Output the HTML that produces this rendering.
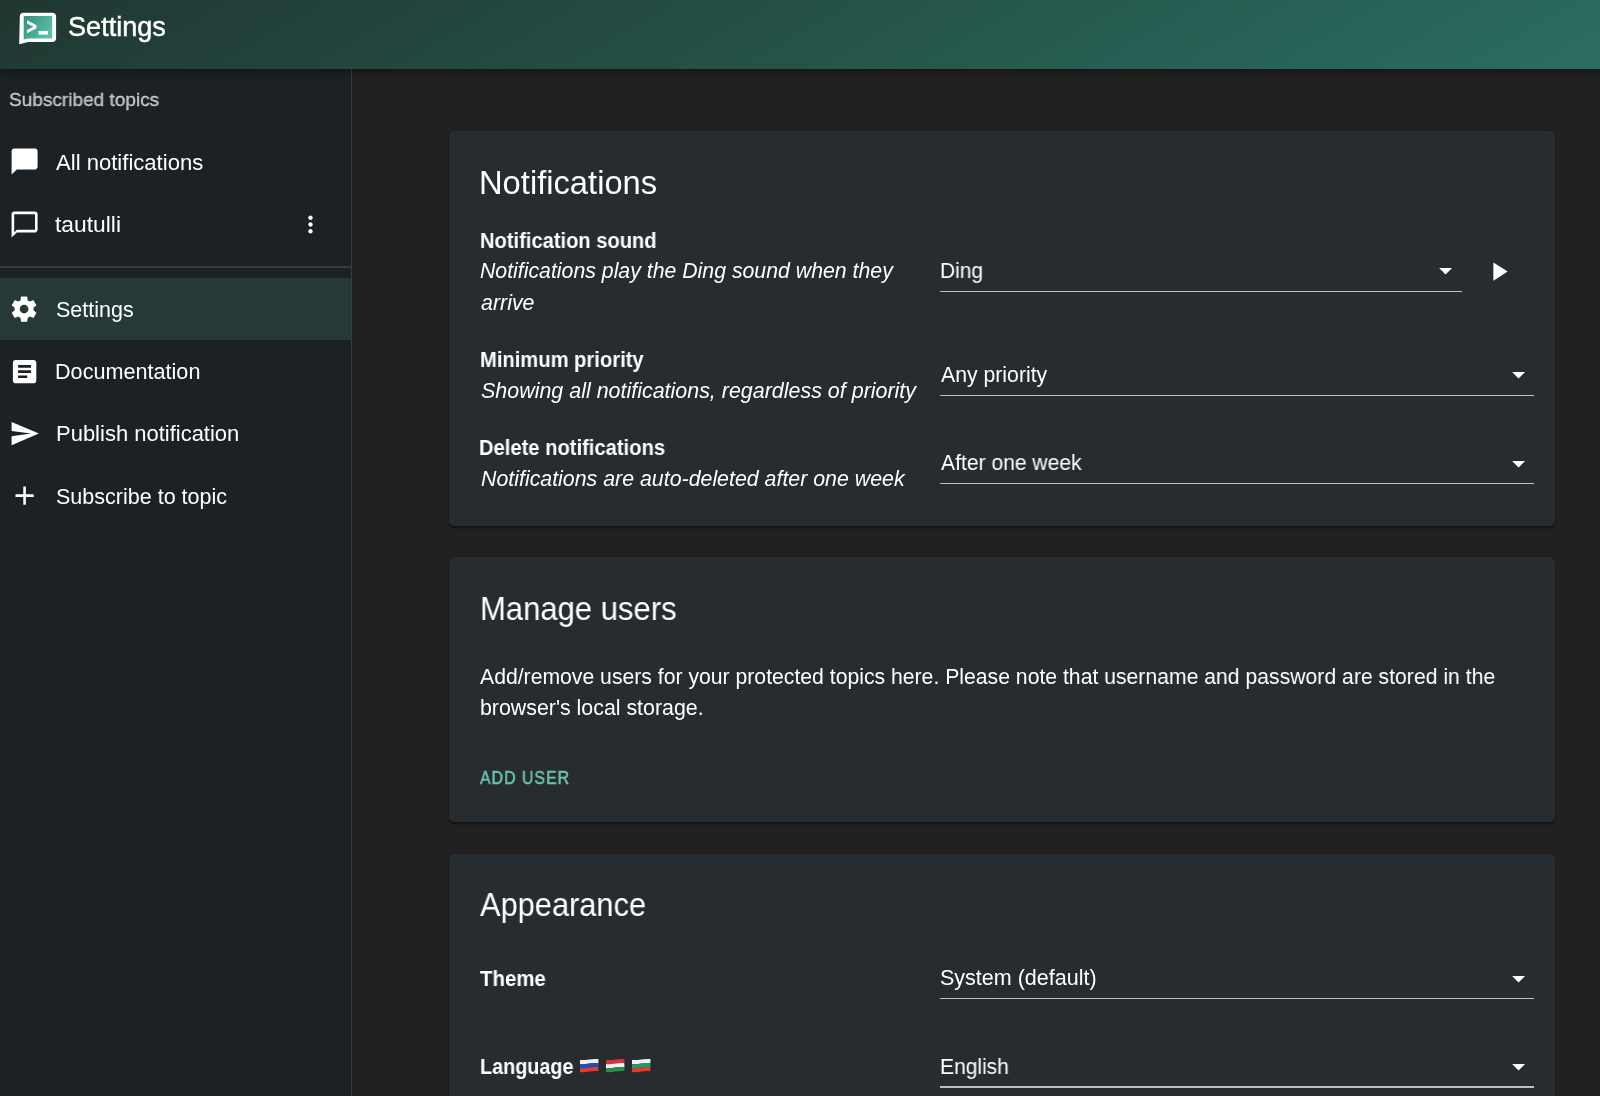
<!DOCTYPE html>
<html><head><meta charset='utf-8'><title>Settings</title>
<style>
html,body{margin:0;padding:0;width:1600px;height:1096px;overflow:hidden;background:#212121;font-family:"Liberation Sans",sans-serif;}
.t{position:absolute;white-space:nowrap;transform-origin:0 0;will-change:transform;}
.ic{position:absolute;display:block;}
#root{position:relative;width:1600px;height:1096px;overflow:hidden;background:#212121;}
</style></head><body><div id="root">
<div style='position:absolute;left:0;top:68.9px;width:351px;height:1030px;background:#1b2124'></div>
<div style='position:absolute;left:350.6px;top:68.9px;width:1.3px;height:1030px;background:rgba(255,255,255,0.12)'></div>
<div style='position:absolute;left:0;top:266.3px;width:350.6px;height:1.3px;background:rgba(255,255,255,0.12)'></div>
<div style='position:absolute;left:0;top:277.6px;width:350.6px;height:62.4px;background:rgba(101,181,163,0.16)'></div>
<div id='sub' class='t' style='left:8.77px;top:90px;font-size:19.2px;line-height:19.2px;font-weight:normal;font-style:normal;color:rgba(255,255,255,0.7);transform:scaleX(0.9918);-webkit-text-stroke:0.3px currentColor;'>Subscribed topics</div>
<svg class='ic' style='left:8.80px;top:146.40px;width:31.2px;height:31.2px' viewBox='0 0 24 24'><path fill='#fff' d='M20 2H4c-1.1 0-1.99.9-1.99 2L2 22l4-4h14c1.1 0 2-.9 2-2V4c0-1.1-.9-2-2-2z'/></svg>
<div id='n1' class='t' style='left:55.86px;top:152px;font-size:21.2px;line-height:21.2px;font-weight:normal;font-style:normal;color:#fff;transform:scaleX(1.0418);'>All notifications</div>
<svg class='ic' style='left:8.80px;top:208.80px;width:31.2px;height:31.2px' viewBox='0 0 24 24'><path fill='#fff' d='M20 2H4c-1.1 0-2 .9-2 2v18l4-4h14c1.1 0 2-.9 2-2V4c0-1.1-.9-2-2-2zm0 14H6l-2 2V4h16v12z'/></svg>
<div id='n2' class='t' style='left:55.11px;top:214px;font-size:21.2px;line-height:21.2px;font-weight:normal;font-style:normal;color:#fff;transform:scaleX(1.0772);'>tautulli</div>
<svg class='ic' style='left:297.10px;top:210.65px;width:27px;height:27px' viewBox='0 0 24 24'><path fill='#fff' d='M12 8c1.1 0 2-.9 2-2s-.9-2-2-2-2 .9-2 2 .9 2 2 2zm0 2c-1.1 0-2 .9-2 2s.9 2 2 2 2-.9 2-2-.9-2-2-2zm0 6c-1.1 0-2 .9-2 2s.9 2 2 2 2-.9 2-2-.9-2-2-2z'/></svg>
<svg class='ic' style='left:9.45px;top:293.90px;width:30.2px;height:30.2px' viewBox='0 0 24 24'><path fill='#fff' d='M19.43 12.98c.04-.32.07-.64.07-.98s-.03-.66-.07-.98l2.11-1.65c.19-.15.24-.42.12-.64l-2-3.46c-.12-.22-.39-.3-.61-.22l-2.49 1c-.52-.4-1.08-.73-1.69-.98l-.38-2.65C14.46 2.18 14.25 2 14 2h-4c-.25 0-.46.18-.49.42l-.38 2.65c-.61.25-1.17.59-1.69.98l-2.49-1c-.23-.09-.49 0-.61.22l-2 3.46c-.13.22-.07.49.12.64l2.11 1.65c-.04.32-.07.65-.07.98s.03.66.07.98l-2.11 1.65c-.19.15-.24.42-.12.64l2 3.46c.12.22.39.3.61.22l2.49-1c.52.4 1.08.73 1.69.98l.38 2.65c.03.24.24.42.49.42h4c.25 0 .46-.18.49-.42l.38-2.65c.61-.25 1.17-.59 1.69-.98l2.49 1c.23.09.49 0 .61-.22l2-3.46c.12-.22.07-.49-.12-.64l-2.11-1.65zM12 15.5c-1.93 0-3.5-1.57-3.5-3.5s1.57-3.5 3.5-3.5 3.5 1.57 3.5 3.5-1.57 3.5-3.5 3.5z'/></svg>
<div id='n3' class='t' style='left:55.75px;top:299px;font-size:21.2px;line-height:21.2px;font-weight:normal;font-style:normal;color:#fff;transform:scaleX(1.0146);'>Settings</div>
<svg class='ic' style='left:8.80px;top:355.60px;width:31.2px;height:31.2px' viewBox='0 0 24 24'><path fill='#fff' d='M19 3H5c-1.1 0-2 .9-2 2v14c0 1.1.9 2 2 2h14c1.1 0 2-.9 2-2V5c0-1.1-.9-2-2-2zm-5 14H7v-2h7v2zm3-4H7v-2h10v2zm0-4H7V7h10v2z'/></svg>
<div id='n4' class='t' style='left:55.21px;top:361px;font-size:21.2px;line-height:21.2px;font-weight:normal;font-style:normal;color:#fff;transform:scaleX(1.0203);'>Documentation</div>
<svg class='ic' style='left:8.80px;top:418.00px;width:31.2px;height:31.2px' viewBox='0 0 24 24'><path fill='#fff' d='M2.01 21 23 12 2.01 3 2 10l15 2-15 2z'/></svg>
<div id='n5' class='t' style='left:56.02px;top:423px;font-size:21.2px;line-height:21.2px;font-weight:normal;font-style:normal;color:#fff;transform:scaleX(1.0376);'>Publish notification</div>
<svg class='ic' style='left:8.80px;top:480.40px;width:31.2px;height:31.2px' viewBox='0 0 24 24'><path fill='#fff' d='M19 13h-6v6h-2v-6H5v-2h6V5h2v6h6v2z'/></svg>
<div id='n6' class='t' style='left:55.78px;top:486px;font-size:21.2px;line-height:21.2px;font-weight:normal;font-style:normal;color:#fff;transform:scaleX(1.0158);'>Subscribe to topic</div>
<div style='position:absolute;left:449.4px;top:131.35px;width:1105.8px;height:394.2px;background:#262c2f;border-radius:5.2px;box-shadow:0 2.6px 1.3px -1.3px rgba(0,0,0,0.2),0 1.3px 1.3px 0 rgba(0,0,0,0.14),0 1.3px 3.9px 0 rgba(0,0,0,0.12)'></div>
<div style='position:absolute;left:449.4px;top:557.0px;width:1105.8px;height:265.3px;background:#262c2f;border-radius:5.2px;box-shadow:0 2.6px 1.3px -1.3px rgba(0,0,0,0.2),0 1.3px 1.3px 0 rgba(0,0,0,0.14),0 1.3px 3.9px 0 rgba(0,0,0,0.12)'></div>
<div style='position:absolute;left:449.4px;top:854.0px;width:1105.8px;height:346.0px;background:#262c2f;border-radius:5.2px;box-shadow:0 2.6px 1.3px -1.3px rgba(0,0,0,0.2),0 1.3px 1.3px 0 rgba(0,0,0,0.14),0 1.3px 3.9px 0 rgba(0,0,0,0.12)'></div>
<div id='c1t' class='t' style='left:479.43px;top:167px;font-size:32.5px;line-height:32.5px;font-weight:normal;font-style:normal;color:#fff;transform:scaleX(1.0062);'>Notifications</div>
<div id='c1a' class='t' style='left:479.83px;top:230px;font-size:21.2px;line-height:21.2px;font-weight:bold;font-style:normal;color:#fff;transform:scaleX(0.9493);'>Notification sound</div>
<div id='c1b' class='t' style='left:480.01px;top:260px;font-size:21.2px;line-height:21.2px;font-weight:normal;font-style:italic;color:#fff;transform:scaleX(1.0042);'>Notifications play the Ding sound when they</div>
<div id='c1c' class='t' style='left:480.83px;top:292px;font-size:21.2px;line-height:21.2px;font-weight:normal;font-style:italic;color:#fff;transform:scaleX(1.0101);'>arrive</div>
<div id='c1d' class='t' style='left:479.83px;top:349px;font-size:21.2px;line-height:21.2px;font-weight:bold;font-style:normal;color:#fff;transform:scaleX(0.9520);'>Minimum priority</div>
<div id='c1e' class='t' style='left:480.52px;top:380px;font-size:21.2px;line-height:21.2px;font-weight:normal;font-style:italic;color:#fff;transform:scaleX(1.0121);'>Showing all notifications, regardless of priority</div>
<div id='c1f' class='t' style='left:479.34px;top:437px;font-size:21.2px;line-height:21.2px;font-weight:bold;font-style:normal;color:#fff;transform:scaleX(0.9520);'>Delete notifications</div>
<div id='c1g' class='t' style='left:480.79px;top:468px;font-size:21.2px;line-height:21.2px;font-weight:normal;font-style:italic;color:#fff;transform:scaleX(1.0075);'>Notifications are auto-deleted after one week</div>
<div id='s1' class='t' style='left:939.53px;top:260px;font-size:21.2px;line-height:21.2px;font-weight:normal;font-style:normal;color:#fff;transform:scaleX(0.9884);'>Ding</div>
<div style='position:absolute;left:940px;top:290.85px;width:522.0px;height:1.3px;background:rgba(255,255,255,0.7)'></div>
<svg class='ic' style='left:1430.00px;top:255.25px;width:31.2px;height:31.2px' viewBox='0 0 24 24'><path fill='#fff' d='M7 10l5 5 5-5z'/></svg>
<svg class='ic' style='left:1482.70px;top:255.60px;width:31.2px;height:31.2px' viewBox='0 0 24 24'><path fill='#fff' d='M8 5v14l11-7z'/></svg>
<div id='s2' class='t' style='left:941.05px;top:364px;font-size:21.2px;line-height:21.2px;font-weight:normal;font-style:normal;color:#fff;transform:scaleX(1.0020);'>Any priority</div>
<div style='position:absolute;left:940px;top:394.75px;width:594.0px;height:1.3px;background:rgba(255,255,255,0.7)'></div>
<svg class='ic' style='left:1502.70px;top:359.05px;width:31.2px;height:31.2px' viewBox='0 0 24 24'><path fill='#fff' d='M7 10l5 5 5-5z'/></svg>
<div id='s3' class='t' style='left:941.06px;top:452px;font-size:21.2px;line-height:21.2px;font-weight:normal;font-style:normal;color:#fff;transform:scaleX(0.9947);'>After one week</div>
<div style='position:absolute;left:940px;top:483.15px;width:594.0px;height:1.3px;background:rgba(255,255,255,0.7)'></div>
<svg class='ic' style='left:1502.70px;top:448.05px;width:31.2px;height:31.2px' viewBox='0 0 24 24'><path fill='#fff' d='M7 10l5 5 5-5z'/></svg>
<div id='c2t' class='t' style='left:480.03px;top:593px;font-size:32.5px;line-height:32.5px;font-weight:normal;font-style:normal;color:#fff;transform:scaleX(0.9544);'>Manage users</div>
<div id='c2a' class='t' style='left:479.86px;top:666px;font-size:21.2px;line-height:21.2px;font-weight:normal;font-style:normal;color:#fff;transform:scaleX(0.9999);'>Add/remove users for your protected topics here. Please note that username and password are stored in the</div>
<div id='c2b' class='t' style='left:479.87px;top:697px;font-size:21.2px;line-height:21.2px;font-weight:normal;font-style:normal;color:#fff;transform:scaleX(1.0076);'>browser&#39;s local storage.</div>
<div id='c2c' class='t' style='left:480.00px;top:769px;font-size:18.2px;line-height:18.2px;font-weight:normal;font-style:normal;color:#6bc2ad;transform:scaleX(0.8696);-webkit-text-stroke:0.55px #6bc2ad;letter-spacing:1.2px;'>ADD USER</div>
<div id='c3t' class='t' style='left:479.78px;top:889px;font-size:32.5px;line-height:32.5px;font-weight:normal;font-style:normal;color:#fff;transform:scaleX(0.9474);'>Appearance</div>
<div id='c3a' class='t' style='left:479.87px;top:968px;font-size:21.2px;line-height:21.2px;font-weight:bold;font-style:normal;color:#fff;transform:scaleX(0.9623);'>Theme</div>
<div id='c3b' class='t' style='left:479.92px;top:1056px;font-size:21.2px;line-height:21.2px;font-weight:bold;font-style:normal;color:#fff;transform:scaleX(0.9345);'>Language</div>
<div id='s4' class='t' style='left:939.58px;top:967px;font-size:21.2px;line-height:21.2px;font-weight:normal;font-style:normal;color:#fff;transform:scaleX(1.0154);'>System (default)</div>
<div style='position:absolute;left:940px;top:998.15px;width:594.0px;height:1.3px;background:rgba(255,255,255,0.7)'></div>
<svg class='ic' style='left:1502.70px;top:963.05px;width:31.2px;height:31.2px' viewBox='0 0 24 24'><path fill='#fff' d='M7 10l5 5 5-5z'/></svg>
<div id='s5' class='t' style='left:940.00px;top:1056px;font-size:21.2px;line-height:21.2px;font-weight:normal;font-style:normal;color:#fff;transform:scaleX(0.9901);'>English</div>
<div style='position:absolute;left:940px;top:1086.35px;width:594.0px;height:1.3px;background:rgba(255,255,255,0.7)'></div>
<svg class='ic' style='left:1502.70px;top:1050.70px;width:31.2px;height:31.2px' viewBox='0 0 24 24'><path fill='#fff' d='M7 10l5 5 5-5z'/></svg>
<svg style='position:absolute;left:579.8px;top:1058.6px;width:18.4px;height:14px;overflow:visible' viewBox='0 0 19 14' preserveAspectRatio='none'><path fill='#f2f2f2' d='M0.00 0.90 C 6.50 1.90, 12.50 -0.90, 19.00 0.10 L 19.00 4.18 C 12.50 3.18, 6.50 5.98, 0.00 4.98 Z'/><path fill='#1f4fc0' d='M0.00 4.93 C 6.50 5.93, 12.50 3.13, 19.00 4.13 L 19.00 8.22 C 12.50 7.22, 6.50 10.02, 0.00 9.02 Z'/><path fill='#e23c2c' d='M0.00 8.97 C 6.50 9.97, 12.50 7.17, 19.00 8.17 L 19.00 12.25 C 12.50 11.25, 6.50 14.05, 0.00 13.05 Z'/></svg>
<svg style='position:absolute;left:606.3px;top:1058.6px;width:18.4px;height:14px;overflow:visible' viewBox='0 0 19 14' preserveAspectRatio='none'><path fill='#d9323f' d='M0.00 0.90 C 6.50 1.90, 12.50 -0.90, 19.00 0.10 L 19.00 4.18 C 12.50 3.18, 6.50 5.98, 0.00 4.98 Z'/><path fill='#f2f2f2' d='M0.00 4.93 C 6.50 5.93, 12.50 3.13, 19.00 4.13 L 19.00 8.22 C 12.50 7.22, 6.50 10.02, 0.00 9.02 Z'/><path fill='#2b8c4a' d='M0.00 8.97 C 6.50 9.97, 12.50 7.17, 19.00 8.17 L 19.00 12.25 C 12.50 11.25, 6.50 14.05, 0.00 13.05 Z'/></svg>
<svg style='position:absolute;left:632.4px;top:1058.6px;width:18.4px;height:14px;overflow:visible' viewBox='0 0 19 14' preserveAspectRatio='none'><path fill='#f2f2f2' d='M0.00 0.90 C 6.50 1.90, 12.50 -0.90, 19.00 0.10 L 19.00 4.18 C 12.50 3.18, 6.50 5.98, 0.00 4.98 Z'/><path fill='#1f9a6c' d='M0.00 4.93 C 6.50 5.93, 12.50 3.13, 19.00 4.13 L 19.00 8.22 C 12.50 7.22, 6.50 10.02, 0.00 9.02 Z'/><path fill='#e23c2c' d='M0.00 8.97 C 6.50 9.97, 12.50 7.17, 19.00 8.17 L 19.00 12.25 C 12.50 11.25, 6.50 14.05, 0.00 13.05 Z'/></svg>
<div style='position:absolute;left:0;top:0;width:1600px;height:68.9px;background:linear-gradient(150deg,#203631 0%,#2a6e60 100%);box-shadow:0 2.6px 5.2px -1.3px rgba(0,0,0,0.2),0 5.2px 6.5px 0 rgba(0,0,0,0.14),0 1.3px 13px 0 rgba(0,0,0,0.12)'></div>
<svg style='position:absolute;left:14px;top:8px;width:48px;height:40px' viewBox='0 0 48 40'>
<defs><linearGradient id='lg' x1='0' y1='0' x2='1' y2='0.6'><stop offset='0' stop-color='#348f7c'/><stop offset='1' stop-color='#5bc0aa'/></linearGradient></defs>
<path fill='#fff' d='M9.6 4.7H38.1Q42.1 4.7 42.1 8.7V30.1Q42.1 34.1 38.1 34.1H14.2L5.2 36.2L5.8 8.7Q5.8 4.7 9.6 4.7Z'/>
<path fill='url(#lg)' d='M10.5 8.1H37.4Q38.2 8.1 38.2 8.9V29.7Q38.2 30.5 37.4 30.5H14.3L9.7 31.6V8.9Q9.7 8.1 10.5 8.1Z'/>
<path fill='#fff' d='M13 12.2L22.5 17.2V20.2L13 25.2V22.0L19.4 18.7L13 15.4Z'/>
<rect fill='#fff' x='24.6' y='23.0' width='9.3' height='3.6'/>
</svg>
<div id='hd' class='t' style='left:68.47px;top:14px;font-size:27.0px;line-height:27.0px;font-weight:normal;font-style:normal;color:#fff;transform:scaleX(1.0034);-webkit-text-stroke:0.45px #fff;'>Settings</div>
</div></body></html>
